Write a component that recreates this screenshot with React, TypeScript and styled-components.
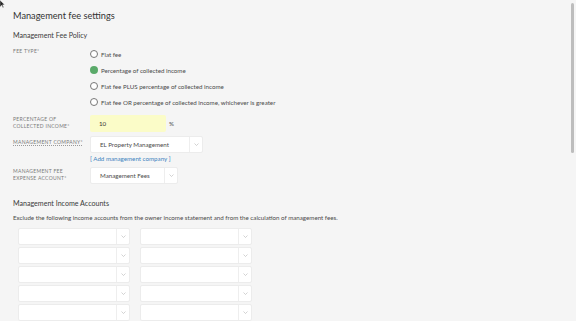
import React from 'react'
import styled, { createGlobalStyle } from 'styled-components'

const GlobalStyle = createGlobalStyle`
    html, body {
        margin: 0;
        padding: 0;
        background: #f5f5f5;
        overflow: hidden;
    }
    body {
        font-family: Lato, "Open Sans", "Liberation Sans", sans-serif;
        color: #333;
    }
`

const feeTypes = [
    'Flat fee',
    'Percentage of collected income',
    'Flat fee PLUS percentage of collected income',
    'Flat fee OR percentage of collected income, whichever is greater',
]

const Chevron = () => (
    <svg width="5" height="3" viewBox="0 0 10 6">
        <path d="M1 1 L5 5 L9 1" fill="none" stroke="#b5b5b5" strokeWidth="1.2" />
    </svg>
)

const Select = ({ width, value }: { width: number; value?: string }) => (
    <SelectBox width={width}>
        <SelectValue>{value}</SelectValue>
        <SelectArrow>
            <Chevron />
        </SelectArrow>
    </SelectBox>
)

const App = () => {
    return (
        <>
            <GlobalStyle />
            <Page>
                <Cursor viewBox="0 0 6 9">
                    <path d="M0 0 L0 8 L2 6 L3.5 9 L4.5 8.5 L3 5.5 L5.5 5.5 Z" fill="#222" stroke="#fff" strokeWidth="0.4" />
                </Cursor>
                <Title>Management fee settings</Title>
                <SectionTitle>Management Fee Policy</SectionTitle>

                <FormRow marginTop={4}>
                    <Label>FEE TYPE*</Label>
                    <RadioList>
                        {feeTypes.map((text, i) => (
                            <RadioItem key={text}>
                                <Radio checked={i === 1} />
                                {text}
                            </RadioItem>
                        ))}
                    </RadioList>
                </FormRow>

                <FormRow marginTop={8}>
                    <Label>PERCENTAGE OF<br />COLLECTED INCOME*</Label>
                    <Field>
                        <PercentInput>10</PercentInput>
                        <Unit>%</Unit>
                    </Field>
                </FormRow>

                <FormRow marginTop={4}>
                    <Label underline padTop={3}>MANAGEMENT COMPANY*</Label>
                    <FieldColumn>
                        <Select width={113} value="EL Property Management" />
                        <AddLink>[ Add management company ]</AddLink>
                    </FieldColumn>
                </FormRow>

                <FormRow marginTop={4}>
                    <Label>MANAGEMENT FEE<br />EXPENSE ACCOUNT*</Label>
                    <Field>
                        <Select width={88} value="Management Fees" />
                    </Field>
                </FormRow>

                <SectionTitle marginTop={13}>Management Income Accounts</SectionTitle>
                <Description>
                    Exclude the following income accounts from the owner income statement and from the calculation of management fees.
                </Description>
                <AccountGrid>
                    {Array.from({ length: 10 }).map((_, i) => (
                        <Select key={i} width={112} />
                    ))}
                </AccountGrid>
            </Page>
            <ScrollThumb />
        </>
    )
}

const Page = styled.div`
    position: relative;
    width: 576px;
    height: 321px;
    padding: 8px 13px 0;
    box-sizing: border-box;
    overflow: hidden;
`

const Cursor = styled.svg`
    position: absolute;
    left: 0;
    top: 0;
    width: 5px;
    height: 8px;
`

const Title = styled.div`
    font-size: 9.2px;
    line-height: 16px;
    color: #333;
`

const SectionTitle = styled.div<{ marginTop?: number }>`
    margin-top: ${({ marginTop }) => marginTop ?? 5}px;
    font-size: 7.1px;
    line-height: 14px;
    color: #3a3a3a;
`

const FormRow = styled.div<{ marginTop?: number }>`
    display: flex;
    align-items: flex-start;
    margin-top: ${({ marginTop }) => marginTop ?? 8}px;
`

const Label = styled.div<{ underline?: boolean; padTop?: number }>`
    width: 77px;
    flex-shrink: 0;
    padding-top: ${({ padTop }) => padTop ?? 1}px;
    font-size: 5px;
    line-height: 7px;
    letter-spacing: 0.3px;
    color: #7a7a7a;
    ${({ underline }) => underline && 'text-decoration: underline dotted #999;'}
`

const RadioList = styled.div`
    display: flex;
    flex-direction: column;
    gap: 6px;
    margin-top: 2px;
`

const RadioItem = styled.div`
    display: flex;
    align-items: center;
    gap: 3px;
    height: 10px;
    font-size: 6.2px;
    color: #4a4a4a;
`

const Radio = styled.span<{ checked?: boolean }>`
    width: 8px;
    height: 8px;
    border-radius: 50%;
    box-sizing: border-box;
    border: ${({ checked }) => (checked ? 'none' : '0.8px solid #777')};
    background: ${({ checked }) => (checked ? '#5aaa6a' : '#fff')};
`

const Field = styled.div`
    display: flex;
    align-items: center;
`

const FieldColumn = styled.div`
    display: flex;
    flex-direction: column;
    align-items: flex-start;
`

const PercentInput = styled.div`
    width: 76px;
    height: 17px;
    box-sizing: border-box;
    padding-left: 9px;
    display: flex;
    align-items: center;
    background: #fbfcc8;
    border-radius: 2px;
    font-size: 6.2px;
    color: #333;
`

const Unit = styled.span`
    margin-left: 3px;
    font-size: 6.2px;
    color: #4a4a4a;
`

const SelectBox = styled.div<{ width: number }>`
    width: ${({ width }) => width}px;
    height: 17px;
    box-sizing: border-box;
    display: flex;
    background: #fff;
    border: 0.5px solid #ececec;
    border-radius: 2px;
`

const SelectValue = styled.div`
    flex: 1;
    display: flex;
    align-items: center;
    padding-left: 9px;
    font-size: 6.2px;
    color: #4a4a4a;
`

const SelectArrow = styled.div`
    width: 12px;
    display: flex;
    align-items: center;
    justify-content: center;
    border-left: 0.5px solid #eee;
`

const AddLink = styled.a`
    margin-top: 2px;
    font-size: 6.2px;
    line-height: 8px;
    color: #3d83c0;
    cursor: pointer;
`

const Description = styled.div`
    margin-top: 2px;
    font-size: 6.2px;
    line-height: 9px;
    color: #4a4a4a;
`

const AccountGrid = styled.div`
    display: grid;
    grid-template-columns: 112px 112px;
    column-gap: 10px;
    row-gap: 2px;
    margin: 6px 0 0 5px;
`

const ScrollThumb = styled.div`
    position: fixed;
    right: 2px;
    top: 3px;
    width: 3px;
    height: 150px;
    border-radius: 2px;
    background: #bdbdbd;
`

export default App
